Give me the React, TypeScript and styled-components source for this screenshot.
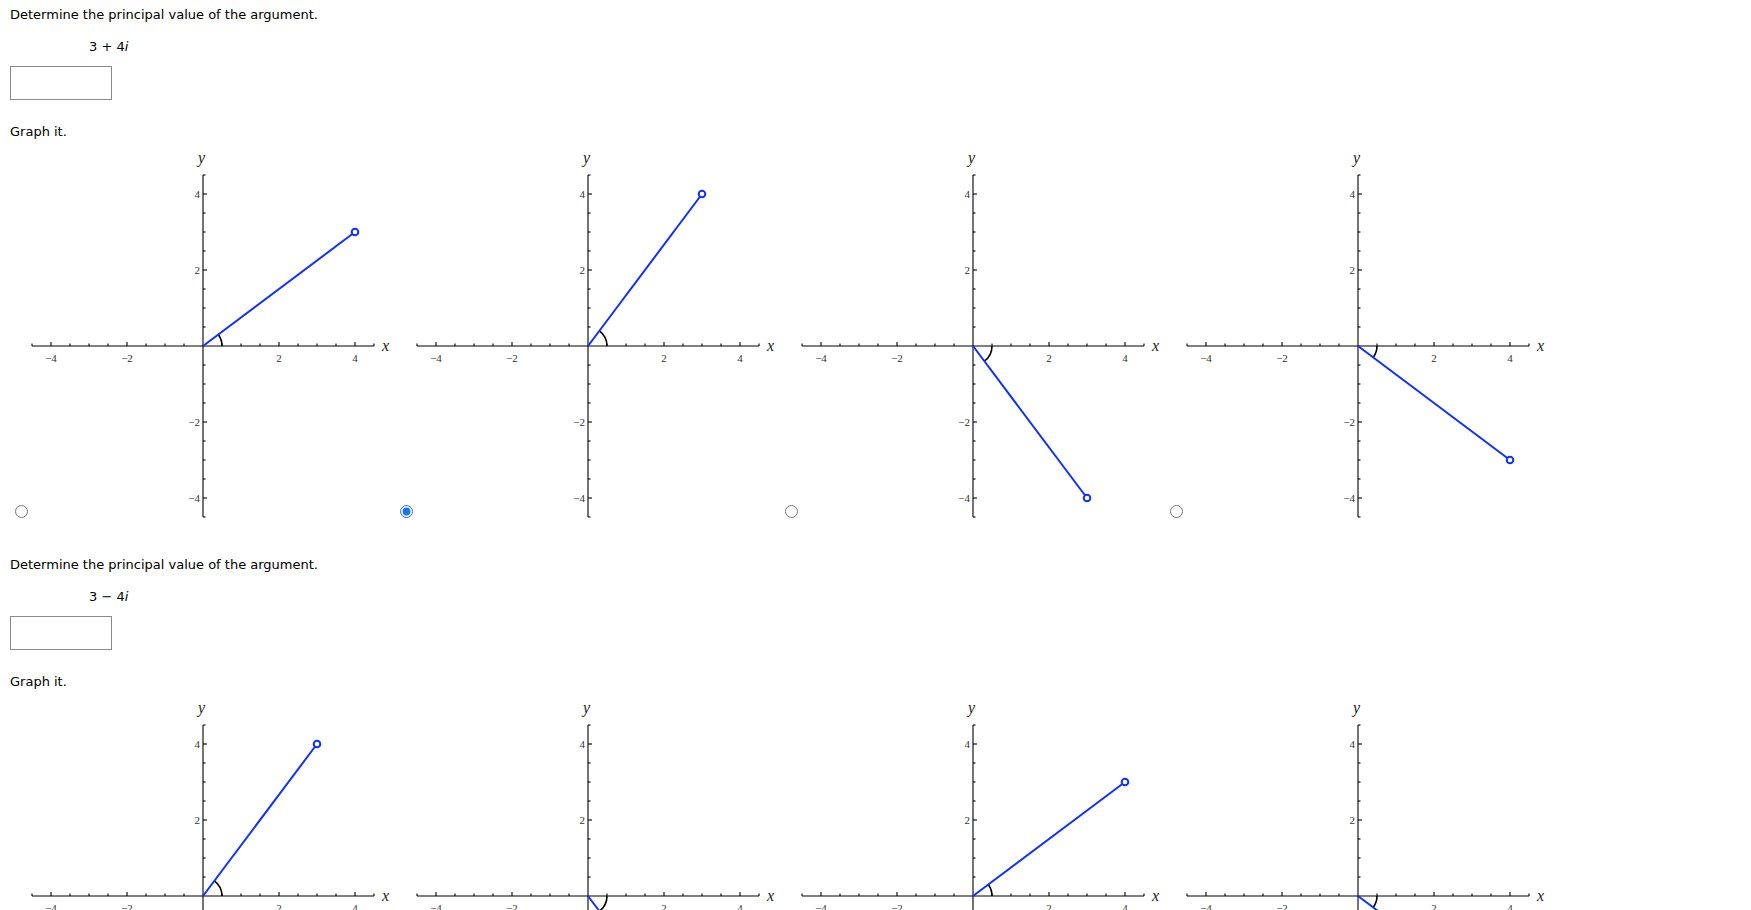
import React from "react"
import styled, { createGlobalStyle } from "styled-components"

const GlobalStyle = createGlobalStyle`
    html, body {
        margin: 0;
        padding: 0;
        background: #fff;
    }
    body {
        font-family: "DejaVu Sans", Verdana, sans-serif;
        font-size: 13px;
        color: #000;
    }
`

// plot geometry, in svg pixels
const UNIT = 38
const OX = 172
const OY = 198
const GRAPH_W = 364
const GRAPH_H = 370

interface Point {
    x: number
    y: number
}

interface QuestionData {
    id: string
    re: number
    sign: string
    im: number
    choices: Point[]
    selected: number | null
}

const questions: QuestionData[] = [
    {
        id: "q1",
        re: 3,
        sign: "+",
        im: 4,
        choices: [
            { x: 4, y: 3 },
            { x: 3, y: 4 },
            { x: 3, y: -4 },
            { x: 4, y: -3 },
        ],
        selected: 1,
    },
    {
        id: "q2",
        re: 3,
        sign: "\u2212",
        im: 4,
        choices: [
            { x: 3, y: 4 },
            { x: 3, y: -4 },
            { x: 4, y: 3 },
            { x: 4, y: -3 },
        ],
        selected: null,
    },
]

const ticks: number[] = []
for (let t = -4.5; t <= 4.5; t += 0.5) {
    if (t !== 0) ticks.push(t)
}

function Graph({ point }: { point: Point }) {
    const px = OX + point.x * UNIT
    const py = OY - point.y * UNIT
    const theta = Math.atan2(point.y, point.x)
    const r = 19
    const ax = OX + r * Math.cos(theta)
    const ay = OY - r * Math.sin(theta)
    const sweep = theta > 0 ? 0 : 1
    const half = 4.5 * UNIT

    return (
        <Plot width={GRAPH_W} height={GRAPH_H} viewBox={`0 0 ${GRAPH_W} ${GRAPH_H}`}>
            <g stroke="#000" strokeWidth={1.1} fill="none">
                <line x1={OX - half} y1={OY} x2={OX + half} y2={OY} />
                <line x1={OX} y1={OY - half} x2={OX} y2={OY + half} />
                {ticks.map((t) => {
                    const major = Number.isInteger(t / 2)
                    const len = major ? 4 : 2.5
                    return (
                        <React.Fragment key={t}>
                            <line x1={OX + t * UNIT} y1={OY} x2={OX + t * UNIT} y2={OY - len} />
                            <line x1={OX} y1={OY - t * UNIT} x2={OX + len} y2={OY - t * UNIT} />
                        </React.Fragment>
                    )
                })}
            </g>
            {[-4, -2, 2, 4].map((t) => (
                <React.Fragment key={t}>
                    <TickText x={OX + t * UNIT} y={OY + 16} textAnchor="middle">
                        {t < 0 ? `\u2212${-t}` : t}
                    </TickText>
                    <TickText x={OX - 3} y={OY - t * UNIT + 4} textAnchor="end">
                        {t < 0 ? `\u2212${-t}` : t}
                    </TickText>
                </React.Fragment>
            ))}
            <AxisName x={OX + 179} y={OY + 5}>x</AxisName>
            <AxisName x={OX - 5} y={OY - 183}>y</AxisName>
            <path
                d={`M ${OX + r} ${OY} A ${r} ${r} 0 0 ${sweep} ${ax} ${ay}`}
                stroke="#000"
                strokeWidth={1.6}
                fill="none"
            />
            <line x1={OX} y1={OY} x2={px} y2={py} stroke="#1030ff" strokeWidth={2} />
            <circle cx={px} cy={py} r={3.3} fill="#fff" stroke="#1030ff" strokeWidth={2} />
        </Plot>
    )
}

function Question({ data }: { data: QuestionData }) {
    return (
        <Block>
            <Prompt>Determine the principal value of the argument.</Prompt>
            <Expression>
                {data.re} {data.sign} {data.im}<i>i</i>
            </Expression>
            <AnswerBox type="text" aria-label="principal value" />
            <Label>Graph it.</Label>
            <Choices>
                {data.choices.map((p, i) => (
                    <Choice key={i}>
                        <Radio
                            type="radio"
                            name={data.id}
                            defaultChecked={data.selected === i}
                        />
                        <Graph point={p} />
                    </Choice>
                ))}
            </Choices>
        </Block>
    )
}

export default function App() {
    return (
        <Page>
            <GlobalStyle />
            {questions.map((q) => (
                <Question key={q.id} data={q} />
            ))}
        </Page>
    )
}

const Page = styled.div`
    padding: 6px 10px 40px;
`
const Block = styled.section`
    & + & {
        margin-top: 38px;
    }
`
const Prompt = styled.p`
    margin: 0;
    line-height: 18px;
`
const Expression = styled.div`
    margin-top: 14px;
    padding-left: 79px;
    line-height: 18px;
    i {
        font-style: italic;
    }
`
const AnswerBox = styled.input`
    display: block;
    box-sizing: border-box;
    margin: 10px 0 0;
    width: 102px;
    height: 34px;
    border: 1px solid #8a8a8a;
    border-radius: 0;
    padding: 2px 4px;
    font: inherit;
`
const Label = styled.p`
    margin: 23px 0 0;
    line-height: 18px;
`
const Choices = styled.div`
    display: flex;
    margin-top: 7px;
`
const Choice = styled.label`
    display: flex;
    align-items: flex-end;
    width: 385px;
    flex: none;
`
const Radio = styled.input`
    flex: none;
    width: 13px;
    height: 13px;
    margin: 0 3px 0 5px;
    accent-color: #1a73ff;
`
const Plot = styled.svg`
    display: block;
    flex: none;
`
const TickText = styled.text`
    font-family: "Liberation Serif", "DejaVu Serif", serif;
    font-size: 11px;
    fill: #333;
`
const AxisName = styled.text`
    font-family: "Liberation Serif", "DejaVu Serif", serif;
    font-style: italic;
    font-size: 16px;
    fill: #222;
`
